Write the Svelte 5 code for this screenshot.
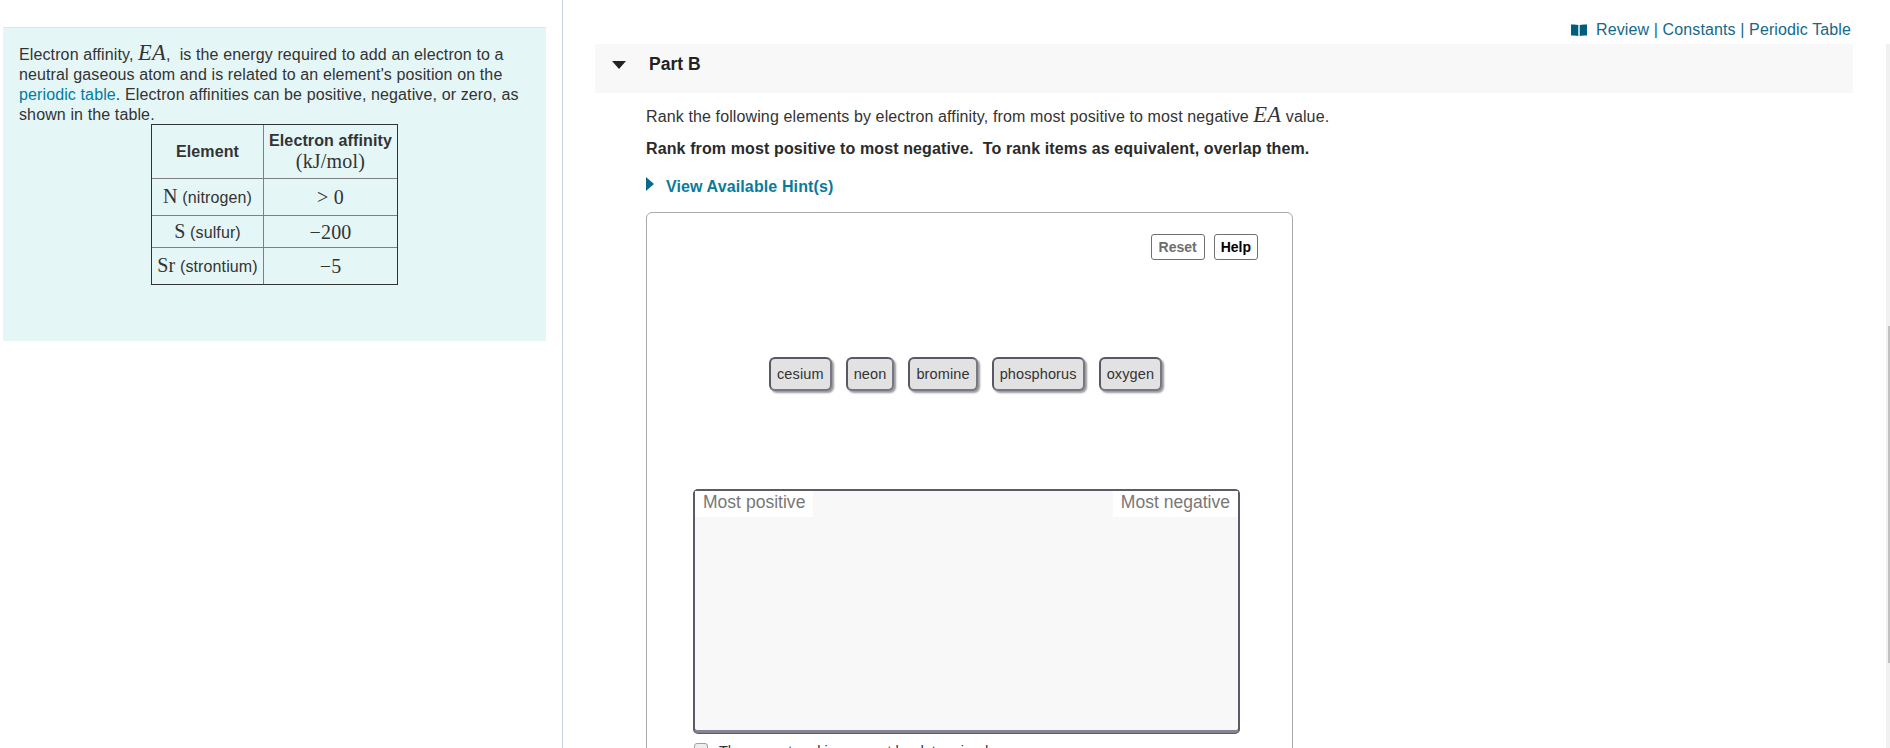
<script>
  const rows = [
    { sym: 'N', name: '(nitrogen)', val: '> 0' },
    { sym: 'S', name: '(sulfur)', val: '−200' },
    { sym: 'Sr', name: '(strontium)', val: '−5' }
  ];
  const items = ['cesium', 'neon', 'bromine', 'phosphorus', 'oxygen'];
</script>

<div class="page">
  <aside class="left">
    <div class="panel">
      <p class="intro">Electron affinity, <span class="math it">EA</span>, &nbsp;is the energy required to add an electron to a neutral gaseous atom and is related to an element's position on the <span class="link">periodic table</span>. Electron affinities can be positive, negative, or zero, as shown in the table.</p>
      <table>
        <thead>
          <tr class="r0">
            <th>Element</th>
            <th>Electron affinity<br /><span class="math unit">(kJ/mol)</span></th>
          </tr>
        </thead>
        <tbody>
          {#each rows as r, i}
            <tr class={'r' + (i + 1)}>
              <td><span class="math">{r.sym}</span> {r.name}</td>
              <td class="math val">{r.val}</td>
            </tr>
          {/each}
        </tbody>
      </table>
    </div>
  </aside>

  <main class="right">
    <div class="toplinks">
      <svg class="book" viewBox="0 0 16 12" width="16" height="12"><path d="M0 .6Q4 0 7.3 1V12Q4 11 0 11.6zM8.7 1Q12 0 16 .6V11.6Q12 11 8.7 12z" fill="#005e7d" /></svg>
      <span>Review | Constants | Periodic Table</span>
    </div>
    <div class="bar">
      <svg class="caret" viewBox="0 0 14 8" width="14" height="8"><path d="M0 0h14L7 8z" fill="#222" /></svg>
      <strong>Part B</strong>
    </div>
    <div class="content">
      <p class="q">Rank the following elements by electron affinity, from most positive to most negative <span class="math it">EA</span> value.</p>
      <p class="instr">Rank from most positive to most negative.&nbsp; To rank items as equivalent, overlap them.</p>
      <div class="hint">
        <svg viewBox="0 0 8 14" width="8" height="14"><path d="M0 0l8 7-8 7z" fill="#0b6a8c" /></svg>
        <span>View Available Hint(s)</span>
      </div>
      <section class="box">
        <div class="btns">
          <button class="reset">Reset</button>
          <button class="help">Help</button>
        </div>
        <div class="items">
          {#each items as it}
            <div class="item">{it}</div>
          {/each}
        </div>
        <div class="drop">
          <span class="lab">Most positive</span>
          <span class="lab">Most negative</span>
        </div>
        <label class="check">
          <span class="cb"></span>
          <span>The correct ranking cannot be determined.</span>
        </label>
      </section>
    </div>
  </main>

  <div class="scroll"><div class="thumb"></div></div>
</div>

<style>
  :global(body) {
    margin: 0;
    background: #fff;
  }
  .page {
    display: flex;
    width: 1890px;
    height: 748px;
    overflow: hidden;
    font-family: "Liberation Sans", Arial, sans-serif;
    font-size: 16px;
    letter-spacing: 0.12px;
    color: #333;
  }
  .left {
    width: 563px;
    flex: none;
    box-sizing: border-box;
    padding: 27px 16px 0 3px;
    border-right: 1px solid #c5d5e4;
  }
  .panel {
    height: 314px;
    box-sizing: border-box;
    background: #e5f6f7;
    border-top: 1px solid #dbe6e8;
    padding: 17px 16px 0;
  }
  .intro {
    margin: 0;
    line-height: 20px;
  }
  .math {
    font-family: "Liberation Serif", "Times New Roman", serif;
    font-size: 20px;
    line-height: 1;
    letter-spacing: 0.2px;
  }
  .it {
    font-style: italic;
    font-size: 22.5px;
    line-height: 0;
  }
  .link {
    color: #007c9e;
  }
  table {
    border-collapse: separate;
    border-spacing: 0;
    margin: -1px auto 0;
    width: 247px;
    border: 1px solid #333;
    text-align: center;
  }
  th, td {
    padding: 0;
    line-height: 20px;
    font-weight: normal;
    border-top: 1px solid #808080;
  }
  .r0 th {
    border-top: 0;
    font-weight: bold;
  }
  th:first-child, td:first-child {
    width: 111px;
    white-space: nowrap;
    border-right: 1px solid #808080;
  }
  .unit {
    font-weight: normal;
    line-height: 20px;
  }
  .r0 { height: 53px; }
  .r1 { height: 37px; }
  .r2 { height: 32px; }
  .r3 { height: 37px; }
  .right {
    flex: 1;
    min-width: 0;
    box-sizing: border-box;
    padding: 0 33px 0 32px;
  }
  .toplinks {
    height: 39px;
    box-sizing: border-box;
    padding: 20px 0 0;
    margin: 0 2px 5px 0;
    display: flex;
    justify-content: flex-end;
    align-items: center;
    gap: 9px;
    line-height: 18px;
    color: #14688a;
  }
  .bar {
    height: 49px;
    box-sizing: border-box;
    background: #f8f8f8;
    display: flex;
    align-items: center;
    padding: 0 0 8px 17px;
    gap: 23px;
  }
  .bar strong {
    color: #222;
    font-size: 17.5px;
    letter-spacing: 0;
  }
  .content {
    padding-left: 51px;
  }
  .q {
    margin: 12px 0 0;
    line-height: 24px;
  }
  .instr {
    margin: 8px 0 0;
    line-height: 24px;
    font-weight: bold;
    color: #2a2a2a;
  }
  .hint {
    margin-top: 14px;
    height: 24px;
    display: flex;
    align-items: center;
    gap: 12px;
    color: #0a7a9a;
    font-weight: bold;
  }
  .hint svg {
    position: relative;
    top: -3px;
  }
  .box {
    margin-top: 13px;
    width: 647px;
    height: 560px;
    box-sizing: border-box;
    border: 1px solid #a9a9a9;
    border-radius: 6px;
    padding: 21px 0 0 46px;
  }
  .btns {
    display: flex;
    justify-content: flex-end;
    gap: 9px;
    padding-right: 34px;
  }
  button {
    height: 26px;
    box-sizing: border-box;
    border: 1px solid #707070;
    border-radius: 3px;
    background: #fff;
    font: bold 14px "Liberation Sans", Arial, sans-serif;
    padding: 0 6px;
  }
  .reset { color: #6e6e6e; padding: 0 7px; }
  .help { color: #000; }
  .items {
    display: flex;
    gap: 14px;
    margin: 97px 0 0 76px;
  }
  .item {
    height: 34px;
    box-sizing: border-box;
    padding: 0 6px;
    display: flex;
    align-items: center;
    background: #e2e2e2;
    border: 2px solid #585866;
    border-right-color: #777786;
    border-bottom-color: #777786;
    border-radius: 6px;
    box-shadow: 2px 2px 2px #9a9a9a;
    font-size: 14.5px;
    color: #333;
  }
  .drop {
    margin-top: 98px;
    width: 547px;
    height: 244px;
    box-sizing: border-box;
    background: #f8f8f8;
    border: 2px solid #5b5b68;
    border-bottom: 3px solid #858592;
    border-radius: 5px;
    box-shadow: 0 1px 0 #5b5b68;
    display: flex;
    justify-content: space-between;
    align-items: flex-start;
  }
  .lab {
    background: #fff;
    color: #777;
    font-size: 17.5px;
    letter-spacing: 0.02px;
    line-height: 22px;
    padding: 0 8px 4px;
  }
  .check {
    display: flex;
    gap: 11px;
    margin-top: 10px;
    line-height: 16px;
    padding-left: 1px;
    font-size: 14.5px;
    letter-spacing: 0;
  }
  .cb {
    width: 14px;
    height: 14px;
    box-sizing: border-box;
    border: 1px solid #a0a0a0;
    border-radius: 3px;
    background: #eee;
  }
  .scroll {
    width: 4px;
    flex: none;
    margin-top: 44px;
    background: #f1f1f1;
    display: flex;
    flex-direction: column;
    align-items: flex-end;
    padding-top: 282px;
    box-sizing: border-box;
  }
  .thumb {
    width: 2px;
    height: 337px;
    background: #c1c1c1;
  }
</style>
